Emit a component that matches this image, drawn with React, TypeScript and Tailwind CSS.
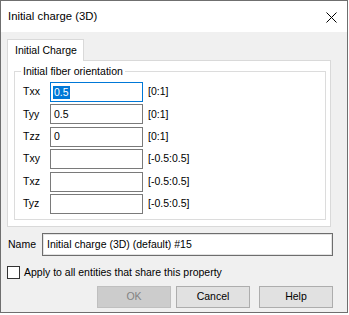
const rows = [
  { label: 'Txx', value: '0.5', range: '[0:1]', focused: true },
  { label: 'Tyy', value: '0.5', range: '[0:1]' },
  { label: 'Tzz', value: '0', range: '[0:1]' },
  { label: 'Txy', value: '', range: '[-0.5:0.5]' },
  { label: 'Txz', value: '', range: '[-0.5:0.5]' },
  { label: 'Tyz', value: '', range: '[-0.5:0.5]' },
];

const App = () => {
  return (
    <div
      className="w-[348px] h-[313px] border border-[#6f6f6f] bg-[#f0f0f0] flex flex-col text-[10.5px] text-black"
      style={{ fontFamily: '"Liberation Sans", Arial, sans-serif' }}
    >
      {/* title bar */}
      <div className="h-[31px] bg-white flex items-center justify-between pl-[7px] pr-[10px] shrink-0">
        <span className="text-[11.3px]">Initial charge (3D)</span>
        <svg width="11" height="11" viewBox="0 0 11 11" className="mt-[1px]">
          <path d="M0.5 0.5 L10.5 10.5 M10.5 0.5 L0.5 10.5" stroke="#000" strokeWidth="1" />
        </svg>
      </div>

      {/* tabs */}
      <div className="pl-[6px] pt-[6px]">
        <div className="w-[77px] h-[22px] bg-white border border-b-0 border-[#d9d9d9] flex items-center pl-[7px] relative top-[1px]">
          Initial Charge
        </div>
        <div className="w-[324px] h-[167px] bg-white border border-[#d9d9d9] pt-[4px] pl-[6px] pr-[4px]">
          <fieldset className="border border-[#dcdcdc] h-[155px] pl-[8px]">
            <legend className="ml-[-2px] px-[2px] leading-[13px]">Initial fiber orientation</legend>
            <div className="flex flex-col gap-[2.4px] pt-[4px]">
              {rows.map((r) => (
                <div key={r.label} className="flex items-center h-[20px]">
                  <span className="w-[27px]">{r.label}</span>
                  <div
                    className={`w-[93px] h-[20px] bg-white border flex items-center pl-[2px] ${
                      r.focused ? 'border-[#0078d7]' : 'border-[#7a7a7a]'
                    }`}
                  >
                    {r.focused ? (
                      <span className="bg-[#0078d7] text-white px-[1px] leading-[13px]">{r.value}</span>
                    ) : (
                      <span className="px-[1px]">{r.value}</span>
                    )}
                  </div>
                  <span className="ml-[5px]">{r.range}</span>
                </div>
              ))}
            </div>
          </fieldset>
        </div>
      </div>

      {/* name */}
      <div className="flex items-center mt-[6px] pl-[7px]">
        <span className="w-[34px]">Name</span>
        <div className="w-[291px] h-[23px] bg-white border border-[#6d6d6d] shadow-[inset_0_0_0_1px_#e3e3e3] flex items-center pl-[4px]">
          Initial charge (3D) (default) #15
        </div>
      </div>

      {/* checkbox */}
      <div className="flex items-center mt-[9px] pl-[6px]">
        <div className="w-[13px] h-[13px] bg-white border border-[#333]" />
        <span className="ml-[4px]">Apply to all entities that share this property</span>
      </div>

      {/* buttons */}
      <div className="flex mt-[5px] pl-[96px]">
        <div className="w-[74px] h-[22px] bg-[#cccccc] border border-[#bfbfbf] text-[#838383] flex items-center justify-center">
          OK
        </div>
        <div className="w-[74px] h-[22px] ml-[5px] bg-[#e1e1e1] border border-[#adadad] flex items-center justify-center">
          Cancel
        </div>
        <div className="w-[74px] h-[22px] ml-[9px] bg-[#e1e1e1] border border-[#adadad] flex items-center justify-center">
          Help
        </div>
      </div>
    </div>
  );
};

export default App;
